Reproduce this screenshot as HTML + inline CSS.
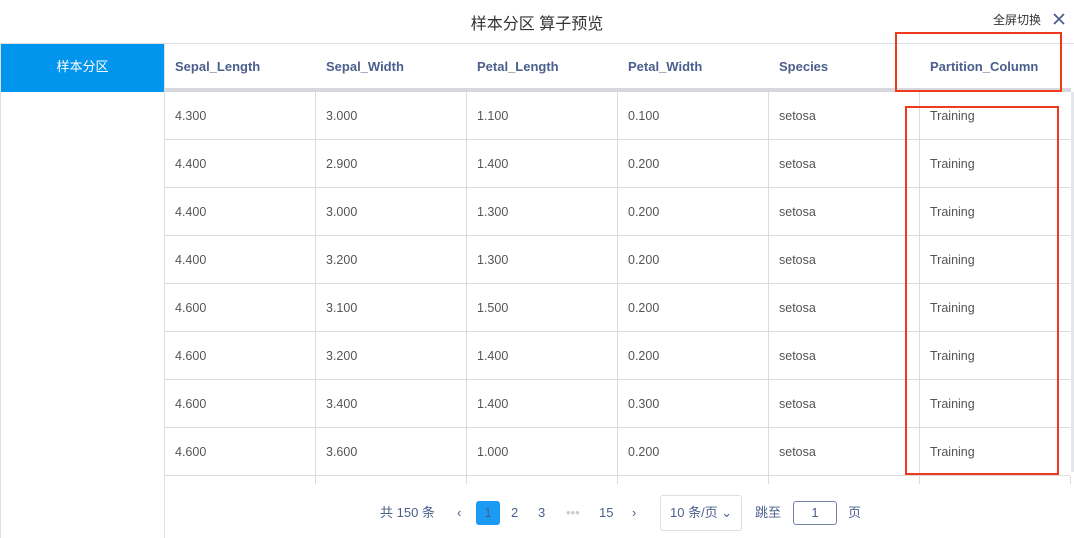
<!DOCTYPE html><html><head><meta charset="utf-8"><style>
*{margin:0;padding:0;box-sizing:border-box}
body{width:1074px;height:538px;background:#fff;font-family:"Liberation Sans","Noto Sans CJK SC",sans-serif;position:relative;overflow:hidden}
.a{position:absolute}
.title{left:0;width:1074px;top:10px;text-align:center;font-size:16px;color:#333}
.hl{left:0;top:43px;width:1074px;height:1px;background:#dde0e6}
.side{left:0;top:44px;width:165px;height:494px;border-right:1px solid #dde0e6;border-left:1px solid #dde0e6}
.tab{left:1px;top:44px;width:163px;height:48px;background:#0295ee;color:#fff;font-size:13px;text-align:center;line-height:46px}
.th{top:44px;height:44px;line-height:46px;font-size:13px;font-weight:bold;color:#4b5f8c;padding-left:10px}
.gl{left:165px;top:88px;width:906px;height:4px;background:#d7d8dd}
.td{height:48px;line-height:49px;font-size:12.5px;color:#555;padding-left:10px;border-left:1px solid #dcdcdc;border-bottom:1px solid #dcdcdc}
.pg{top:503px;font-size:13px;color:#4b5f8c;line-height:20px}
.red{border:2px solid #f03a1e}
</style></head><body>
<div class="a title">样本分区 算子预览</div>
<div class="a" style="left:993px;top:11px;font-size:12px;color:#333">全屏切换</div>
<svg class="a" style="left:1052px;top:12px" width="14" height="14"><path d="M2 2L12 12M12 2L2 12" stroke="#4b5f8c" stroke-width="1.8"/></svg>
<div class="a hl"></div>
<div class="a side"></div>
<div class="a tab">样本分区</div>
<div class="a th" style="left:165px">Sepal_Length</div>
<div class="a th" style="left:316px">Sepal_Width</div>
<div class="a th" style="left:467px">Petal_Length</div>
<div class="a th" style="left:618px">Petal_Width</div>
<div class="a th" style="left:769px">Species</div>
<div class="a th" style="left:920px">Partition_Column</div>
<div class="a gl"></div>
<div class="a" style="left:1071px;top:92px;width:3px;height:380px;background:#e4e6ec"></div>
<div class="a" id="rows" style="left:164px;top:92px;width:906px"></div>
<script>
var d=[["4.300","3.000","1.100","0.100"],["4.400","2.900","1.400","0.200"],["4.400","3.000","1.300","0.200"],["4.400","3.200","1.300","0.200"],["4.600","3.100","1.500","0.200"],["4.600","3.200","1.400","0.200"],["4.600","3.400","1.400","0.300"],["4.600","3.600","1.000","0.200"]];
var h="";d.forEach(function(r,i){var c=r.concat(["setosa","Training"]);c.forEach(function(v,j){h+='<div class="a td" style="left:'+(j*151)+'px;top:'+(i*48)+'px;width:151px">'+v+'</div>'})});
for(var j=0;j<7;j++)h+='<div class="a" style="left:'+(j*151)+'px;top:384px;width:1px;height:8px;background:#dcdcdc"></div>';
document.getElementById("rows").innerHTML=h;
</script>
<div class="a red" style="left:895px;top:32px;width:167px;height:60px"></div>
<div class="a red" style="left:905px;top:106px;width:154px;height:369px"></div>
<div class="a pg" style="left:380px">共 150 条</div>
<div class="a pg" style="left:457px">‹</div>
<div class="a" style="left:476px;top:501px;width:24px;height:24px;background:#1c9bf4;border-radius:3px;color:#4b5f8c;font-size:13px;text-align:center;line-height:24px">1</div>
<div class="a pg" style="left:511px">2</div>
<div class="a pg" style="left:538px">3</div>
<div class="a pg" style="left:566px;color:#ccc">•••</div>
<div class="a pg" style="left:599px">15</div>
<div class="a pg" style="left:632px">›</div>
<div class="a" style="left:660px;top:495px;width:82px;height:36px;border:1px solid #dcdfe6;border-radius:3px;font-size:13px;color:#4b5f8c;line-height:34px;padding-left:9px">10 条/页 ⌄</div>
<div class="a pg" style="left:755px">跳至</div>
<div class="a" style="left:793px;top:501px;width:44px;height:24px;border:1px solid #7283a8;border-radius:3px;font-size:13px;color:#4b5f8c;text-align:center;line-height:22px">1</div>
<div class="a pg" style="left:848px">页</div>
</body></html>
